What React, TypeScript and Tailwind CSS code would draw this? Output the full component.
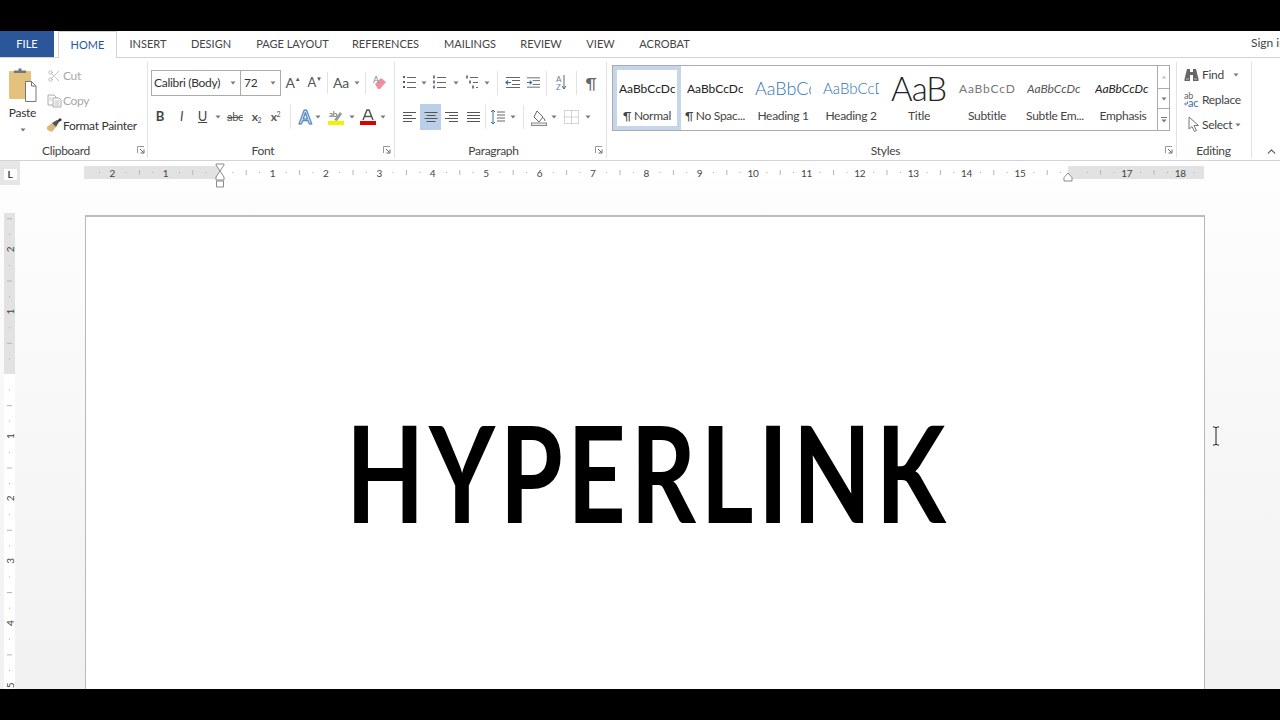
import { ChevronUp, Scissors } from 'lucide-react';
import type { ReactNode } from 'react';

const ui = "font-['Lato','Liberation_Sans',sans-serif]";

const tabs = [
  { label: 'INSERT', width: 'w-[62px]' },
  { label: 'DESIGN', width: 'w-[64px]' },
  { label: 'PAGE LAYOUT', width: 'w-[99px]' },
  { label: 'REFERENCES', width: 'w-[87px]' },
  { label: 'MAILINGS', width: 'w-[82px]' },
  { label: 'REVIEW', width: 'w-[60px]' },
  { label: 'VIEW', width: 'w-[59px]' },
  { label: 'ACROBAT', width: 'w-[69px]' },
];

const galleryStyles = [
  { preview: 'AaBbCcDc', label: '¶ Normal', cls: 'text-[12px] tracking-[0px] text-[#222]', selected: true },
  { preview: 'AaBbCcDc', label: '¶ No Spac...', cls: 'text-[12px] tracking-[0px] text-[#222]' },
  { preview: 'AaBbCc', label: 'Heading 1', cls: 'text-[18px] font-light tracking-[0px] text-[#2e74b5]' },
  { preview: 'AaBbCcDd', label: 'Heading 2', cls: 'text-[15px] font-light tracking-[0px] text-[#2e74b5]' },
  { preview: 'AaBbCc', label: 'Title', cls: 'text-[33px] font-light tracking-[-1px] text-[#222]' },
  { preview: 'AaBbCcDd', label: 'Subtitle', cls: 'text-[12px] tracking-[0.8px] text-[#777]' },
  { preview: 'AaBbCcDc', label: 'Subtle Em...', cls: 'text-[12px] italic tracking-[0px] text-[#555]' },
  { preview: 'AaBbCcDc', label: 'Emphasis', cls: 'text-[12px] italic tracking-[0px] text-[#222]' },
];

function Caret({ className = '' }: { className?: string }) {
  return (
    <svg width="6" height="4" viewBox="0 0 6 4" className={`shrink-0 ${className}`}>
      <path d="M0.5 0.5h5L3 3.5z" fill="#777" />
    </svg>
  );
}

function Launcher() {
  return (
    <svg width="8" height="8" viewBox="0 0 8 8" className="absolute right-[3px] top-[4px]">
      <path d="M0.5 7V0.5H7" fill="none" stroke="#999" />
      <path d="M3 3l3.5 3.5M7 3.5V7H3.5" fill="none" stroke="#666" />
    </svg>
  );
}

function Sep({ className = 'h-[24px]' }: { className?: string }) {
  return <div className={`w-px shrink-0 bg-[#e2e2e2] ${className}`} />;
}

function Slot({ w, children, className = '' }: { w: string; children: ReactNode; className?: string }) {
  return <div className={`flex shrink-0 items-center justify-center ${w} ${className}`}>{children}</div>;
}

function Lines({ widths, x = 1 }: { widths: number[]; x?: number }) {
  return (
    <svg width="14" height="14" viewBox="0 0 14 14">
      {widths.map((w, i) => (
        <rect key={i} x={x === 1 ? 1 : x === 2 ? (14 - w) / 2 : 13 - w} y={2 + i * 3} width={w} height="1" fill="#555" />
      ))}
    </svg>
  );
}

function Bullets({ kind }: { kind: 'dot' | 'num' | 'multi' }) {
  return (
    <svg width="14" height="15" viewBox="0 0 14 15">
      {[2, 7, 12].map((y, i) => (
        <g key={y}>
          {kind === 'dot' && <rect x="1" y={y - 1} width="2" height="2" fill="#4a5f7a" />}
          {kind === 'num' && <rect x="1" y={y - 1.5} width="2" height="3" fill="#6b7f99" />}
          {kind === 'multi' && <rect x={1 + i * 3} y={y - 1.5} width="2" height="3" fill="#6b7f99" />}
          <rect x={kind === 'multi' ? 5 + i * 3 : 5} y={y} width={kind === 'multi' ? 8 - i * 3 : 9} height="1" fill="#666" />
        </g>
      ))}
    </svg>
  );
}

function Indent({ inc }: { inc?: boolean }) {
  return (
    <svg width="15" height="13" viewBox="0 0 15 13">
      {[1, 4, 8, 11].map(y => (
        <rect key={y} x={y === 1 || y === 11 ? 1 : 7} y={y} width={y === 1 || y === 11 ? 14 : 8} height="1" fill="#666" />
      ))}
      <path d={inc ? 'M1 6.5h5M4 4.5l2 2-2 2' : 'M6 6.5H1M3 4.5l-2 2 2 2'} fill="none" stroke="#3b6ea8" strokeWidth="1.2" />
    </svg>
  );
}

function PasteIcon() {
  return (
    <svg width="28" height="34" viewBox="0 0 28 34">
      <rect x="0" y="3" width="22" height="28" rx="1" fill="#e4c27e" />
      <path d="M5 5V2.5h4.5V0.5h3v2H17V5z" fill="#74757a" />
      <path d="M16.5 13.5h6l4.5 4.5v15.5H16.5z" fill="#fff" stroke="#777" />
      <path d="M22.5 13.5V18H27" fill="none" stroke="#777" />
    </svg>
  );
}

function CopyIcon() {
  return (
    <svg width="15" height="14" viewBox="0 0 15 14" fill="#fff" stroke="#aaa">
      <path d="M1 1h6l2 2v8H1z" />
      <path d="M6 4h6l2 2v7H6z" />
      <path d="M7.5 7h5M7.5 9h5M7.5 11h5M2.5 4h2M2.5 6h2" stroke="#bbb" />
    </svg>
  );
}

function BrushIcon() {
  return (
    <svg width="16" height="15" viewBox="0 0 16 15">
      <path d="M1 9l5-4 4 4-4 5-2-1-1 .5-.5-1.5-1.5-.5z" fill="#dcb878" />
      <path d="M6 5l5-3 2 2-3 5z" fill="#555" />
      <path d="M11 3l3-3 2 2-3 2z" fill="#333" />
    </svg>
  );
}

function Binoculars() {
  return (
    <svg width="15" height="14" viewBox="0 0 15 14" fill="#666">
      <path d="M3 1h3v3h3V1h3l2.5 10v2H9V7H6v6H.5v-2z" />
      <path d="M2 11h3M10 11h3" stroke="#bbb" />
    </svg>
  );
}

function ReplaceIcon() {
  return (
    <div className="relative h-[15px] w-[15px] leading-none">
      <span className="absolute left-0 top-[-1px] text-[9px] text-[#666]">ab</span>
      <span className="absolute left-[4px] top-[5px] text-[11px] text-[#3f6d9f]">ac</span>
      <svg width="4" height="5" viewBox="0 0 4 5" className="absolute left-0 top-[9px]">
        <path d="M3.5 0.5V3H1M2 1.5L0.5 3 2 4.5" fill="none" stroke="#3f6d9f" strokeWidth="0.8" />
      </svg>
    </div>
  );
}

function CursorArrow() {
  return (
    <svg width="12" height="17" viewBox="0 0 12 17">
      <path d="M1 1v12l3-2.5 2.5 5 2-1-2.5-5h4.5z" fill="#fff" stroke="#777" />
    </svg>
  );
}

function Ruler() {
  const zero = 135;
  const unit = 53.4;
  const ticks: ReactNode[] = [];
  for (let i = -10; i <= 80; i++) {
    const x = zero + (i * unit) / 4;
    if (x < 4 || x > 1116 || i % 4 === 0) continue;
    ticks.push(
      i % 2 === 0 ? (
        <rect key={i} x={x} y="8" width="1" height="5" fill="#b5b5b5" />
      ) : (
        <rect key={i} x={x} y="10" width="1" height="1" fill="#aaa" />
      ),
    );
  }
  const numbers = [-2, -1, 1, 2, 3, 4, 5, 6, 7, 8, 9, 10, 11, 12, 13, 14, 15, 17, 18];
  return (
    <svg width="1120" height="26" viewBox="0 0 1120 26" className="ml-[64px] mt-[1px] shrink-0">
      <rect x="0" y="4" width="1120" height="13" fill="#fff" />
      <rect x="0" y="4" width="136" height="13" fill="#e2e2e2" />
      <rect x="984" y="4" width="136" height="13" fill="#e2e2e2" />
      {ticks}
      {numbers.map(n => (
        <text key={n} x={zero + n * unit} y="14.5" textAnchor="middle" fontSize="10" fill="#444" fontFamily="Lato">
          {Math.abs(n)}
        </text>
      ))}
      <path d="M132 2h8v1l-4 6 4 6v3h-8v-3l4-6-4-6z" fill="#fff" stroke="#8a8a8a" />
      <path d="M132.5 19h7v6h-7z" fill="#fff" stroke="#8a8a8a" />
      <path d="M984 11l4 4.5V19h-8v-3.5z" fill="#fff" stroke="#8a8a8a" />
    </svg>
  );
}

function VRuler() {
  const zero = 161;
  const unit = 62.3;
  const ticks: ReactNode[] = [];
  for (let i = -10; i <= 22; i++) {
    const y = zero + (i * unit) / 4;
    if (y < 4 || i % 4 === 0) continue;
    ticks.push(
      i % 2 === 0 ? (
        <rect key={i} x="3" y={y} width="5" height="1" fill="#b5b5b5" />
      ) : (
        <rect key={i} x="5" y={y} width="1" height="1" fill="#aaa" />
      ),
    );
  }
  return (
    <svg width="11" height="476" viewBox="0 0 11 476" className="ml-[4px] shrink-0">
      <rect width="11" height="476" fill="#fff" />
      <rect width="11" height="161" fill="#e2e2e2" />
      {ticks}
      {[-2, -1, 1, 2, 3, 4, 5].map(n => (
        <text
          key={n}
          transform={`translate(9.5 ${zero + n * unit}) rotate(-90)`}
          textAnchor="middle"
          fontSize="10"
          fill="#444"
          fontFamily="Lato"
        >
          {Math.abs(n)}
        </text>
      ))}
    </svg>
  );
}

export default function App() {
  return (
    <div className={`flex h-[720px] w-[1280px] flex-col overflow-hidden bg-black text-[12px] tracking-[-0.3px] text-[#444] ${ui}`}>
      <div className="h-[31px] shrink-0" />
      <div className="relative flex min-h-0 flex-1 flex-col overflow-hidden bg-white">
        {/* tabs */}
        <div className="flex h-[27px] shrink-0 items-stretch border-b border-[#d4d4d4] text-[11px] tracking-normal">
          <div className="flex w-[54px] items-center justify-center bg-[#2b579a] pt-[1px] text-white">FILE</div>
          <div className="z-10 mb-[-1px] ml-[4px] flex w-[59px] items-center justify-center border-x border-t border-[#d4d4d4] bg-white pt-[1px] text-[#2b579a]">
            HOME
          </div>
          {tabs.map(t => (
            <div key={t.label} className={`flex items-center justify-center pt-[1px] ${t.width}`}>
              {t.label}
            </div>
          ))}
          <div className="ml-auto w-[29px] overflow-hidden whitespace-nowrap pt-[3px] text-[12px]">Sign in</div>
        </div>

        {/* ribbon */}
        <div className="flex h-[103px] shrink-0 border-b border-[#d4d4d4] pt-[4px]">
          {/* clipboard */}
          <div className="flex h-[96px] w-[148px] shrink-0 flex-col border-r border-[#e2e2e2]">
            <div className="flex h-[76px] shrink-0">
              <div className="flex w-[45px] flex-col items-center pt-[6px]">
                <PasteIcon />
                <span className="mt-[2px] text-[#333]">Paste</span>
                <Caret className="mt-[6px]" />
              </div>
              <div className="flex flex-col pt-[1px]">
                <div className="flex h-[25px] items-center text-[#a8a8a8]">
                  <Slot w="w-[18px]">
                    <Scissors size={14} strokeWidth={1.2} color="#aaa" />
                  </Slot>
                  Cut
                </div>
                <div className="flex h-[25px] items-center text-[#a8a8a8]">
                  <Slot w="w-[18px]">
                    <CopyIcon />
                  </Slot>
                  Copy
                </div>
                <div className="flex h-[25px] items-center text-[#333]">
                  <Slot w="w-[18px]">
                    <BrushIcon />
                  </Slot>
                  Format Painter
                </div>
              </div>
            </div>
            <div className="relative mt-[4px] w-[132px] text-center">
              Clipboard
              <span className="absolute left-[135px] top-0 block h-full w-[13px]"><Launcher /></span>
            </div>
          </div>

          {/* font */}
          <div className="flex h-[96px] w-[247px] shrink-0 flex-col border-r border-[#e2e2e2]">
            <div className="mt-[8px] flex h-[25px] shrink-0 items-center pl-[3px]">
              <div className="flex h-[26px] w-[90px] shrink-0 items-center justify-between border border-[#ababab] pl-[2px] pr-[4px] text-[#333]">
                Calibri (Body)
                <Caret />
              </div>
              <div className="ml-[-1px] flex h-[26px] w-[41px] shrink-0 items-center justify-between border border-[#ababab] pl-[3px] pr-[4px] text-[#333]">
                72
                <Caret />
              </div>
              <Slot w="w-[22px]" className="ml-[1px] text-[14px] text-[#555]">
                A<span className="mb-[8px] text-[6px]">▲</span>
              </Slot>
              <Slot w="w-[21px]" className="text-[13px] text-[#555]">
                A<span className="mb-[8px] text-[6px]">▼</span>
              </Slot>
              <Sep className="ml-[2px] h-[22px]" />
              <div className="flex w-[37px] shrink-0 items-center justify-center gap-[5px] text-[14px] text-[#555]">
                Aa
                <Caret />
              </div>
              <Sep className="h-[22px]" />
              <Slot w="w-[28px]">
                <svg width="16" height="16" viewBox="0 0 16 16">
                  <path d="M3 9l6-6 5 4-6 7H6z" fill="#ee8f9f" />
                  <text x="1" y="8" fontSize="9" fill="#7a8aa0" fontFamily="Lato">A</text>
                </svg>
              </Slot>
            </div>
            <div className="mt-[9px] flex h-[26px] shrink-0 items-center">
              <Slot w="w-[22px]" className="ml-[1px] text-[13px] font-bold text-[#444]">B</Slot>
              <Slot w="w-[21px]" className="text-[13px] italic text-[#444]">I</Slot>
              <Slot w="w-[21px]" className="text-[13px] underline text-[#444]">U</Slot>
              <Slot w="w-[10px]"><Caret /></Slot>
              <Slot w="w-[24px]" className="text-[11px] line-through text-[#555]">abc</Slot>
              <Slot w="w-[19px]" className="text-[12px] font-bold text-[#555]">
                x<span className="mt-[6px] text-[7px] font-normal">2</span>
              </Slot>
              <Slot w="w-[19px]" className="text-[12px] font-bold text-[#555]">
                x<span className="mb-[6px] text-[7px] font-normal">2</span>
              </Slot>
              <Sep className="ml-[5px] h-[24px]" />
              <Slot w="w-[18px]" className="ml-[5px] text-[18px] font-bold text-[#dbe8f5] [-webkit-text-stroke:1px_#3f78b5]">A</Slot>
              <Slot w="w-[8px]"><Caret /></Slot>
              <Slot w="w-[28px]">
                <svg width="16" height="17" viewBox="0 0 16 17">
                  <text x="1" y="8" fontSize="8" fill="#555" fontFamily="Lato">ab</text>
                  <path d="M6 11l6-8 2 2-5 7z" fill="#999" />
                  <rect x="0" y="12" width="16" height="4" fill="#f4f000" />
                </svg>
              </Slot>
              <Slot w="w-[4px]"><Caret /></Slot>
              <Slot w="w-[28px]">
                <svg width="16" height="17" viewBox="0 0 16 17">
                  <path d="M3 11L7 1h2l4 10M5 7.5h6" fill="none" stroke="#555" strokeWidth="1.5" />
                  <rect x="0" y="12" width="16" height="4" fill="#e00000" />
                </svg>
              </Slot>
              <Slot w="w-[2px]"><Caret /></Slot>
            </div>
            <div className="relative mt-[12px] pr-[16px] text-center">
              Font
              <Launcher />
            </div>
          </div>

          {/* paragraph */}
          <div className="flex h-[96px] w-[212px] shrink-0 flex-col border-r border-[#e2e2e2]">
            <div className="mt-[8px] flex h-[25px] shrink-0 items-center pl-[6px]">
              <Slot w="w-[15px]"><Bullets kind="dot" /></Slot>
              <Slot w="w-[15px]"><Caret /></Slot>
              <Slot w="w-[16px]"><Bullets kind="num" /></Slot>
              <Slot w="w-[17px]"><Caret /></Slot>
              <Slot w="w-[15px]"><Bullets kind="multi" /></Slot>
              <Slot w="w-[15px]"><Caret /></Slot>
              <Sep className="ml-[3px] h-[24px]" />
              <Slot w="w-[28px]"><Indent /></Slot>
              <Slot w="w-[14px]"><Indent inc /></Slot>
              <Sep className="ml-[6px] h-[24px]" />
              <Slot w="w-[29px]">
                <div className="flex items-center">
                  <div className="flex flex-col text-[8px] leading-[8px] text-[#5d84b0]"><span>A</span><span>Z</span></div>
                  <svg width="6" height="15" viewBox="0 0 6 15"><path d="M3 0v14M1 11l2 3 2-3" fill="none" stroke="#666" /></svg>
                </div>
              </Slot>
              <Sep className="h-[24px]" />
              <Slot w="w-[28px]" className="text-[16px] text-[#666]">¶</Slot>
            </div>
            <div className="mt-[9px] flex h-[26px] shrink-0 items-center pl-[3px]">
              <Slot w="w-[22px]"><Lines widths={[13, 9, 13, 9]} /></Slot>
              <Slot w="w-[21px]" className="h-[26px] bg-[#bccfe8]"><Lines widths={[13, 9, 13, 9]} x={2} /></Slot>
              <Slot w="w-[22px]"><Lines widths={[13, 9, 13, 9]} x={3} /></Slot>
              <Slot w="w-[19px]"><Lines widths={[13, 13, 13, 13]} /></Slot>
              <Sep className="ml-[3px] h-[24px]" />
              <Slot w="w-[23px]">
                <svg width="15" height="16" viewBox="0 0 15 16">
                  <path d="M3 1v14M1 3l2-2 2 2M1 13l2 2 2-2" fill="none" stroke="#3b6ea8" />
                  <path d="M7 3h8M7 6h8M7 9h8M7 12h8" stroke="#666" />
                </svg>
              </Slot>
              <Slot w="w-[8px]"><Caret /></Slot>
              <Sep className="ml-[6px] h-[24px]" />
              <Slot w="w-[29px]">
                <svg width="16" height="17" viewBox="0 0 16 17">
                  <path d="M6 2l6 6-4 5-5-5z" fill="#fff" stroke="#666" />
                  <path d="M11 8c2 1 3 3 3 4" stroke="#3f78b5" fill="none" />
                  <rect x="0.5" y="14" width="15" height="2.5" fill="#eee" stroke="#888" />
                </svg>
              </Slot>
              <Slot w="w-[2px]"><Caret /></Slot>
              <Slot w="w-[32px]">
                <svg width="15" height="14" viewBox="0 0 15 14" fill="none" stroke="#aaa" strokeDasharray="1 1">
                  <path d="M.5.5h14v13H.5zM.5 7h14M7.5.5v13" />
                </svg>
              </Slot>
              <Slot w="w-[2px]"><Caret /></Slot>
            </div>
            <div className="relative mt-[12px] pr-[14px] text-center">
              Paragraph
              <Launcher />
            </div>
          </div>

          {/* styles */}
          <div className="flex h-[96px] w-[570px] shrink-0 flex-col border-r border-[#e2e2e2] pl-[5px]">
            <div className="mt-[3px] flex h-[66px] w-[558px] shrink-0 border border-[#ababab]">
              {galleryStyles.map(s => (
                <div
                  key={s.label}
                  className={`flex w-[68px] shrink-0 flex-col items-center overflow-hidden ${s.selected ? 'border-[4px] border-[#c5d5ea]' : 'border-[4px] border-transparent'}`}
                >
                  <div className={`flex h-[37px] w-[56px] shrink-0 items-center overflow-hidden whitespace-nowrap ${s.cls}`}>
                    {s.preview}
                  </div>
                  <div className="whitespace-nowrap">{s.label}</div>
                </div>
              ))}
              <div className="flex w-[12px] shrink-0 flex-col border-l border-[#ababab]">
                <div className="flex h-[22px] items-center justify-center"><Caret className="rotate-180 opacity-40" /></div>
                <div className="flex h-[21px] items-center justify-center border-y border-[#ababab]"><Caret /></div>
                <div className="flex flex-1 flex-col items-center justify-center gap-[1px]">
                  <div className="h-px w-[6px] bg-[#777]" />
                  <Caret />
                </div>
              </div>
            </div>
            <div className="relative mt-[11px] pr-[17px] text-center">
              Styles
              <Launcher />
            </div>
          </div>

          {/* editing */}
          <div className="flex h-[96px] w-[75px] shrink-0 flex-col border-r border-[#e2e2e2] pl-[7px]">
            <div className="flex h-[25px] shrink-0 items-center">
              <Slot w="w-[18px]" className="justify-start"><Binoculars /></Slot>
              Find
              <Caret className="ml-[9px]" />
            </div>
            <div className="flex h-[25px] shrink-0 items-center">
              <Slot w="w-[18px]" className="justify-start"><ReplaceIcon /></Slot>
              Replace
            </div>
            <div className="flex h-[25px] shrink-0 items-center">
              <Slot w="w-[18px]" className="pl-[2px]"><CursorArrow /></Slot>
              Select
              <Caret className="ml-[3px]" />
            </div>
            <div className="mt-[5px] pr-[8px] text-center">Editing</div>
          </div>

          <div className="flex flex-1 items-end justify-end pb-[2px] pr-[2px]">
            <ChevronUp size={13} color="#555" strokeWidth={2} />
          </div>
        </div>

        {/* document area */}
        <div className="flex min-h-0 flex-1 flex-col bg-gradient-to-b from-[#fefefe] to-[#f1f1f1]">
          <div className="flex h-[26px] shrink-0">
            <div className="flex h-[24px] w-[20px] shrink-0 items-center justify-center bg-[#e6e6e6]">
              <div className="mt-[2px] flex h-[11px] w-[13px] items-center justify-center bg-white text-[10px] font-bold leading-none text-[#444]">L</div>
            </div>
            <Ruler />
          </div>
          <div className="mt-[26px] flex min-h-0 flex-1">
            <VRuler />
            <div className="ml-[70px] mt-[2px] h-[600px] w-[1120px] shrink-0 overflow-hidden border-x border-t-2 border-x-[#b8b8b8] border-t-[#bdbdbd] bg-white pl-[6px] pt-[164px] text-center text-[135px] font-bold leading-[180px] tracking-normal text-black">
              <span className="inline-block scale-x-[0.755] tracking-[6px] blur-[0.6px]">HYPERLINK</span>
            </div>
          </div>
        </div>

        {/* text cursor */}
        <svg width="8" height="20" viewBox="0 0 8 20" className="absolute left-[1212px] top-[395px]">
          <path d="M1 1h2l1 1 1-1h2M4 2v16M1 19h2l1-1 1 1h2" fill="none" stroke="#222" />
        </svg>
      </div>
      <div className="h-[31px] shrink-0" />
    </div>
  );
}
